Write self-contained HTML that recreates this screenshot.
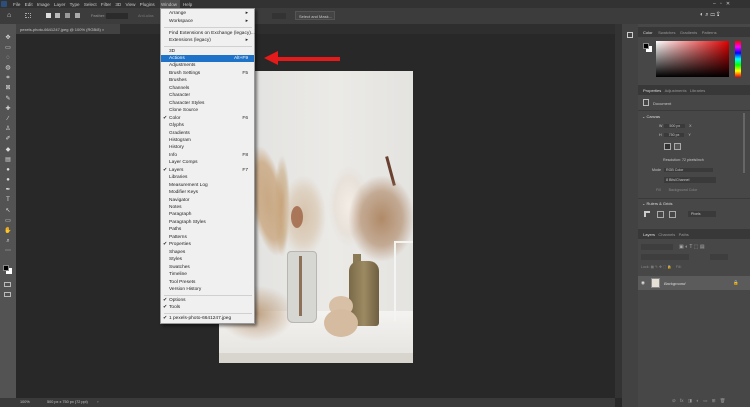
<!DOCTYPE html>
<html><head><meta charset="utf-8"><style>
*{margin:0;padding:0;box-sizing:border-box}
body{width:750px;height:407px;overflow:hidden;background:#282828;font-family:"Liberation Sans",sans-serif;position:relative}
.a{position:absolute}
.t{position:absolute;font-size:4.5px;color:#c8c8c8;white-space:nowrap}
.ti{position:absolute;left:3px;width:10px;text-align:center;font-size:6px;color:#ddd;line-height:7px}
.menu{position:absolute;left:160px;top:8px;width:95px;height:316px;background:#f0f0f0;border:1px solid #999;box-shadow:2px 2px 3px rgba(0,0,0,.5)}
.mi{position:absolute;left:0;width:93px;height:7.45px;font-size:4.8px;color:#222;padding-left:8px;line-height:7.45px;white-space:nowrap}
.mi .k{position:absolute;right:6px}
.mi .c{position:absolute;left:2px}
.sep{position:absolute;left:3px;width:88px;height:1px;background:#d0d0d0}
.hdr{position:absolute;left:638px;width:112px;height:10px;background:#383838}
</style></head><body>
<div class="a" style="left:0;top:0;width:750px;height:8px;background:#323232"></div>
<div class="a" style="left:1px;top:1px;width:6px;height:6px;background:#2b4e7a;border-radius:1px"></div>
<div class="t" style="left:13px;top:1.5px;font-size:4.6px;word-spacing:3px">File Edit Image Layer Type Select Filter 3D View Plugins</div>
<div class="a" style="left:160px;top:0;width:20px;height:8px;background:#505050"></div>
<div class="t" style="left:161px;top:1.5px">Window</div>
<div class="t" style="left:183px;top:1.5px">Help</div>
<div class="t" style="left:713px;top:1px;font-size:5px">–&nbsp;&nbsp;&nbsp;▫&nbsp;&nbsp;&nbsp;✕</div>
<div class="a" style="left:0;top:8px;width:750px;height:16px;background:#3c3c3c"></div>
<div class="t" style="left:7px;top:12px;font-size:7px;color:#ddd">⌂</div>
<div class="a" style="left:25px;top:13px;width:6px;height:5px;border:1px dotted #aaa"></div>
<div class="a" style="left:46px;top:13px;width:5px;height:5px;background:#ddd"></div>
<div class="a" style="left:55px;top:13px;width:5px;height:5px;background:#bbb"></div>
<div class="a" style="left:65px;top:13px;width:5px;height:5px;background:#999"></div>
<div class="a" style="left:75px;top:13px;width:5px;height:5px;background:#aaa"></div>
<div class="t" style="left:91px;top:14px;font-size:3.8px;color:#999">Feather: 0 px</div>
<div class="a" style="left:106px;top:13px;width:22px;height:6px;background:#2b2b2b"></div>
<div class="t" style="left:138px;top:14px;font-size:3.8px;color:#777">Anti-alias</div>
<div class="a" style="left:272px;top:13px;width:14px;height:6px;background:#333"></div>
<div class="a" style="left:295px;top:11px;width:40px;height:9px;background:#444;border:1px solid #555"></div>
<div class="t" style="left:299px;top:13.5px;font-size:4px">Select and Mask...</div>
<div class="t" style="left:700px;top:12px;font-size:6px;color:#ddd">◐ ⌕ ▭ ⇪</div>
<div class="a" style="left:16px;top:24px;width:599px;height:10px;background:#2e2e2e"></div>
<div class="a" style="left:16px;top:24px;width:104px;height:10px;background:#424242"></div>
<div class="t" style="left:20px;top:26.5px;font-size:4px">pexels-photo-6641247.jpeg @ 100% (RGB/8) ×</div>
<div class="a" style="left:0;top:24px;width:16px;height:374px;background:#535353"></div>
<div class="ti" style="top:35px">✥</div><div class="ti" style="top:45px">▭</div><div class="ti" style="top:55px">◌</div>
<div class="ti" style="top:65px">◍</div><div class="ti" style="top:75px">⌗</div><div class="ti" style="top:85px">⊠</div>
<div class="ti" style="top:96px">✎</div><div class="ti" style="top:106px">✚</div><div class="ti" style="top:116px">∕</div>
<div class="ti" style="top:126px">♙</div><div class="ti" style="top:136px">✐</div><div class="ti" style="top:147px">◆</div>
<div class="ti" style="top:157px">▤</div><div class="ti" style="top:167px">●</div><div class="ti" style="top:177px">●</div>
<div class="ti" style="top:187px">✒</div><div class="ti" style="top:197px">T</div><div class="ti" style="top:208px">↖</div>
<div class="ti" style="top:218px">▭</div><div class="ti" style="top:228px">✋</div><div class="ti" style="top:238px">⌕</div>
<div class="ti" style="top:248px">⋯</div>
<div class="a" style="left:3px;top:265px;width:6px;height:6px;background:#000;border:1px solid #888;z-index:2"></div>
<div class="a" style="left:6px;top:268px;width:6px;height:6px;background:#fff"></div>
<div class="a" style="left:4px;top:282px;width:7px;height:5px;border:1px solid #bbb"></div>
<div class="a" style="left:4px;top:292px;width:7px;height:5px;border:1px solid #bbb"></div>
<div class="a" style="left:16px;top:398px;width:599px;height:9px;background:#3a3a3a"></div>
<div class="a" style="left:0;top:398px;width:16px;height:9px;background:#3a3a3a"></div>
<div class="t" style="left:20px;top:400px;font-size:3.8px">100%</div>
<div class="t" style="left:47px;top:400px;font-size:3.8px">500 px x 750 px (72 ppi)&nbsp;&nbsp;&nbsp;&nbsp;&nbsp;&nbsp;&nbsp;&nbsp;&nbsp;›</div>
<!-- photo -->
<div class="a" style="left:219px;top:71px;width:194px;height:292px;background:linear-gradient(90deg,#e0e0de,#ebeae7 60%,#e4e3e0);overflow:hidden">
 <div class="a" style="left:0;top:240px;width:194px;height:52px;background:linear-gradient(#f4f3f1,#e4e2de)"></div>
 <div class="a" style="left:0;top:282px;width:194px;height:10px;background:#d8d5cf"></div>
 <div class="a" style="left:32px;top:75px;width:34px;height:110px;background:radial-gradient(ellipse,#c9a985 0%,#cfb393 50%,rgba(220,200,175,0) 72%);transform:rotate(-10deg)"></div>
 <div class="a" style="left:55px;top:85px;width:16px;height:100px;background:radial-gradient(ellipse,#c8a47c 0%,rgba(200,170,130,.6) 50%,rgba(0,0,0,0) 72%)"></div>
 <div class="a" style="left:62px;top:105px;width:45px;height:80px;background:radial-gradient(ellipse,#d6c2ab 0%,rgba(215,195,170,.6) 45%,rgba(230,220,205,0) 72%)"></div>
 <div class="a" style="left:72px;top:135px;width:12px;height:22px;background:#9a5a3a;border-radius:50%;opacity:.75"></div>
 <div class="a" style="left:110px;top:95px;width:40px;height:80px;background:radial-gradient(ellipse,#f3ede6 0%,rgba(230,220,210,.6) 50%,rgba(0,0,0,0) 72%)"></div>
 <div class="a" style="left:170px;top:85px;width:3px;height:30px;background:#6a4030;transform:rotate(-15deg)"></div>
 <div class="a" style="left:130px;top:105px;width:65px;height:85px;background:radial-gradient(ellipse,#b08a68 0%,rgba(180,145,115,.7) 45%,rgba(0,0,0,0) 72%)"></div>
 <div class="a" style="left:0;top:215px;width:75px;height:55px;background:radial-gradient(ellipse,#bfa283 0%,rgba(200,175,150,.5) 45%,rgba(0,0,0,0) 72%)"></div>
 <div class="a" style="left:68px;top:180px;width:30px;height:72px;background:#d6d6d2;border-radius:4px 4px 6px 6px;border:1px solid #b8b6b0"></div>
 <div class="a" style="left:80px;top:185px;width:3px;height:60px;background:#8c7058"></div>
 <div class="a" style="left:134px;top:183px;width:8px;height:10px;background:#8a7a55"></div>
 <div class="a" style="left:130px;top:190px;width:30px;height:65px;background:linear-gradient(90deg,#7a6a48,#9c8a62 50%,#6f5f40);border-radius:10px 10px 3px 3px"></div>
 <div class="a" style="left:110px;top:225px;width:24px;height:20px;background:#d8c0a6;border-radius:50%"></div>
 <div class="a" style="left:105px;top:238px;width:34px;height:28px;background:#d5bba0;border-radius:50%"></div>
 <div class="a" style="left:175px;top:170px;width:19px;height:80px;border-left:2px solid #f4f4f2;border-top:2px solid #f4f4f2"></div>
</div>
<div class="a" style="left:275px;top:56.5px;width:65px;height:4px;background:#e51b1b"></div>
<div class="a" style="left:264px;top:51px;width:0;height:0;border-top:7.5px solid transparent;border-bottom:7.5px solid transparent;border-right:14px solid #e51b1b"></div>
<div class="a" style="left:615px;top:24px;width:7px;height:374px;background:#333"></div>
<div class="a" style="left:622px;top:24px;width:16px;height:383px;background:#424242"></div>
<div class="a" style="left:627px;top:32px;width:6px;height:6px;border:1px solid #ccc"></div>
<div class="a" style="left:638px;top:24px;width:112px;height:383px;background:#474747"></div>
<div class="hdr" style="top:27px"></div>
<div class="t" style="left:643px;top:29.5px;font-size:4px;color:#ddd">Color&nbsp;&nbsp;&nbsp;&nbsp;&nbsp;<span style="color:#999">Swatches&nbsp;&nbsp;&nbsp;&nbsp;Gradients&nbsp;&nbsp;&nbsp;&nbsp;Patterns</span></div>
<div class="a" style="left:643px;top:43px;width:6px;height:6px;background:#000;border:1px solid #888;z-index:2"></div>
<div class="a" style="left:646px;top:46px;width:6px;height:6px;background:#fff"></div>
<div class="a" style="left:656px;top:41px;width:73px;height:36px;background:linear-gradient(transparent,#000),linear-gradient(90deg,#fff,#e00000)"></div>
<div class="a" style="left:735px;top:41px;width:6px;height:36px;background:linear-gradient(red,#f0f,#00f,#0ff,#0f0,#ff0,red)"></div>
<div class="hdr" style="top:85px"></div>
<div class="t" style="left:643px;top:88px;font-size:4px;color:#ddd">Properties&nbsp;&nbsp;&nbsp;<span style="color:#999">Adjustments&nbsp;&nbsp;&nbsp;Libraries</span></div>
<div class="a" style="left:643px;top:99px;width:6px;height:7px;border:1px solid #bbb"></div>
<div class="t" style="left:653px;top:101px;font-size:4px">Document</div>
<div class="a" style="left:638px;top:110px;width:112px;height:1px;background:#3a3a3a"></div>
<div class="t" style="left:642px;top:114px;font-size:4px;color:#ddd">⌄ Canvas</div>
<div class="t" style="left:659px;top:124px;font-size:3.6px">W&nbsp; <span style="background:#3a3a3a;padding:0 5px">500 px</span>&nbsp;&nbsp;&nbsp;&nbsp;X</div>
<div class="t" style="left:659px;top:133px;font-size:3.6px">H&nbsp; <span style="background:#3a3a3a;padding:0 5px">750 px</span>&nbsp;&nbsp;&nbsp;&nbsp;Y</div>
<div class="a" style="left:664px;top:143px;width:7px;height:7px;background:#333;border:1px solid #aaa"></div>
<div class="a" style="left:674px;top:143px;width:7px;height:7px;background:#555;border:1px solid #aaa"></div>
<div class="t" style="left:663px;top:158px;font-size:3.6px">Resolution: 72 pixels/inch</div>
<div class="t" style="left:652px;top:168px;font-size:3.6px">Mode&nbsp;&nbsp;&nbsp;<span style="background:#3a3a3a;padding:0 30px 0 2px">RGB Color</span></div>
<div class="a" style="left:664px;top:177px;width:52px;height:6px;background:#3a3a3a"></div>
<div class="t" style="left:666px;top:178px;font-size:3.6px">8 Bits/Channel</div>
<div class="t" style="left:656px;top:188px;font-size:3.6px;color:#888">Fill&nbsp;&nbsp;&nbsp;&nbsp;&nbsp;&nbsp;&nbsp;&nbsp;Background Color</div>
<div class="a" style="left:638px;top:198px;width:112px;height:1px;background:#3a3a3a"></div>
<div class="t" style="left:642px;top:201px;font-size:4px;color:#ddd">⌄ Rulers &amp; Grids</div>
<div class="a" style="left:644px;top:211px;width:6px;height:6px;border-left:2px solid #ccc;border-top:2px solid #ccc"></div>
<div class="a" style="left:657px;top:211px;width:7px;height:7px;border:1px solid #aaa"></div>
<div class="a" style="left:669px;top:211px;width:7px;height:7px;border:1px solid #aaa"></div>
<div class="a" style="left:688px;top:211px;width:28px;height:6px;background:#3a3a3a"></div>
<div class="t" style="left:691px;top:212px;font-size:3.6px">Pixels</div>
<div class="a" style="left:743px;top:113px;width:2px;height:60px;background:#666"></div>
<div class="hdr" style="top:229px"></div>
<div class="t" style="left:643px;top:232px;font-size:4px;color:#ddd">Layers&nbsp;&nbsp;&nbsp;<span style="color:#999">Channels&nbsp;&nbsp;&nbsp;Paths</span></div>
<div class="a" style="left:641px;top:244px;width:32px;height:6px;background:#3e3e3e"></div>
<div class="t" style="left:679px;top:243.5px;font-size:5px;color:#aaa">▣ ◐ T ⬚ ▤</div>
<div class="a" style="left:641px;top:254px;width:48px;height:6px;background:#3e3e3e"></div>
<div class="a" style="left:710px;top:254px;width:18px;height:6px;background:#3e3e3e"></div>
<div class="t" style="left:641px;top:265px;font-size:3.6px;color:#888">Lock: ▦ ✎ ✥ ⬚ 🔒&nbsp;&nbsp;&nbsp;&nbsp;Fill:</div>
<div class="a" style="left:638px;top:276px;width:112px;height:14px;background:#5b5b5b"></div>
<div class="t" style="left:641px;top:280px;font-size:4.5px;color:#ddd">◉</div>
<div class="a" style="left:651px;top:278px;width:9px;height:10px;background:#e6dfd6;border:1px solid #888"></div>
<div class="t" style="left:664px;top:281px;font-size:4px;color:#ddd;font-style:italic">Background</div>
<div class="t" style="left:733px;top:280px;font-size:4.5px">🔒</div>
<div class="t" style="left:672px;top:398px;font-size:4.5px;color:#999;word-spacing:3px">⊘ fx ◨ ◐ ▭ ⊞ 🗑</div>
<div class="menu">
<div class="mi" style="top:1px">Arrange<span class="k">▸</span></div>
<div class="mi" style="top:8.5px">Workspace<span class="k">▸</span></div>
<div class="sep" style="top:18px"></div>
<div class="mi" style="top:20.5px">Find Extensions on Exchange (legacy)...</div>
<div class="mi" style="top:28px">Extensions (legacy)<span class="k">▸</span></div>
<div class="sep" style="top:37px"></div>
<div class="mi" style="top:38.5px">3D</div>
<div class="mi" style="top:46px;background:#1e73c8;color:#fff">Actions<span class="k">Alt+F9</span></div>
<div class="mi" style="top:53.4px">Adjustments</div>
<div class="mi" style="top:60.9px">Brush Settings<span class="k">F5</span></div>
<div class="mi" style="top:68.3px">Brushes</div>
<div class="mi" style="top:75.8px">Channels</div>
<div class="mi" style="top:83.2px">Character</div>
<div class="mi" style="top:90.7px">Character Styles</div>
<div class="mi" style="top:98.1px">Clone Source</div>
<div class="mi" style="top:105.6px"><span class="c">✔</span>Color<span class="k">F6</span></div>
<div class="mi" style="top:113px">Glyphs</div>
<div class="mi" style="top:120.5px">Gradients</div>
<div class="mi" style="top:127.9px">Histogram</div>
<div class="mi" style="top:135.4px">History</div>
<div class="mi" style="top:142.8px">Info<span class="k">F8</span></div>
<div class="mi" style="top:150.3px">Layer Comps</div>
<div class="mi" style="top:157.7px"><span class="c">✔</span>Layers<span class="k">F7</span></div>
<div class="mi" style="top:165.2px">Libraries</div>
<div class="mi" style="top:172.6px">Measurement Log</div>
<div class="mi" style="top:180.1px">Modifier Keys</div>
<div class="mi" style="top:187.5px">Navigator</div>
<div class="mi" style="top:195px">Notes</div>
<div class="mi" style="top:202.4px">Paragraph</div>
<div class="mi" style="top:209.9px">Paragraph Styles</div>
<div class="mi" style="top:217.3px">Paths</div>
<div class="mi" style="top:224.8px">Patterns</div>
<div class="mi" style="top:232.2px"><span class="c">✔</span>Properties</div>
<div class="mi" style="top:239.7px">Shapes</div>
<div class="mi" style="top:247.1px">Styles</div>
<div class="mi" style="top:254.6px">Swatches</div>
<div class="mi" style="top:262px">Timeline</div>
<div class="mi" style="top:269.5px">Tool Presets</div>
<div class="mi" style="top:276.9px">Version History</div>
<div class="sep" style="top:286px"></div>
<div class="mi" style="top:287.5px"><span class="c">✔</span>Options</div>
<div class="mi" style="top:295px"><span class="c">✔</span>Tools</div>
<div class="sep" style="top:304px"></div>
<div class="mi" style="top:306px"><span class="c">✔</span>1 pexels-photo-6641247.jpeg</div>
</div>
</body></html>
